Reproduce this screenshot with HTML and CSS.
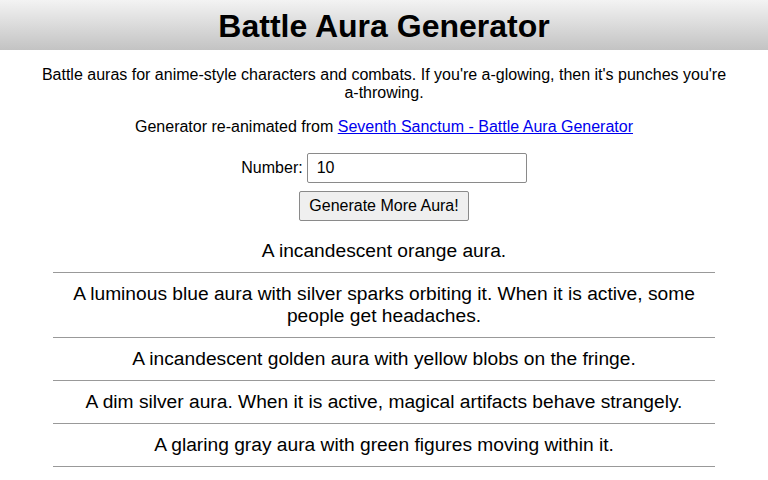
FILE: index.html
```html
<!DOCTYPE html>
<html>
<head>
<meta charset="utf-8">
<link rel="stylesheet" href="styles.css">
</head>
<body>
<header class="top">
  <h1 class="title">Battle Aura Generator</h1>
</header>
<main class="content">
  <p class="intro">Battle auras for anime-style characters and combats. If you're a-glowing, then it's punches you're a-throwing.</p>
  <p class="credit">Generator re-animated from <a href="#">Seventh Sanctum - Battle Aura Generator</a></p>
  <div class="form-row">
    <label class="label" for="num">Number:</label>
    <input class="num" id="num" type="text" value="10">
  </div>
  <div class="btn-row">
    <button class="btn">Generate More Aura!</button>
  </div>
  <ul class="results">
    <li class="item">A incandescent orange aura.</li>
    <li class="item">A luminous blue aura with silver sparks orbiting it. When it is active, some people get headaches.</li>
    <li class="item">A incandescent golden aura with yellow blobs on the fringe.</li>
    <li class="item">A dim silver aura. When it is active, magical artifacts behave strangely.</li>
    <li class="item">A glaring gray aura with green figures moving within it.</li>
  </ul>
</main>
</body>
</html>
```

FILE: styles.css
```css
html, body {
  margin: 0;
  padding: 0;
  background: #fff;
}
body {
  font-family: "Liberation Sans", Arial, sans-serif;
  font-size: 16px;
  color: #000;
}
.top {
  height: 50px;
  box-sizing: border-box;
  padding-top: 2px;
  background: linear-gradient(to bottom, #f3f3f3, #c3c3c3);
  display: flex;
  align-items: center;
  justify-content: center;
}
.title {
  margin: 0;
  font-size: 32px;
  font-weight: bold;
  line-height: 1;
}
.content {
  padding: 0 40px;
  text-align: center;
}
.intro {
  margin: 16px 0 0;
}
.credit {
  margin: 16px 0 0;
}
.credit a {
  color: #0000ee;
}
.form-row {
  margin-top: 17px;
  display: flex;
  justify-content: center;
  align-items: center;
  gap: 5px;
}
.label {
  font-size: 16px;
}
.num {
  box-sizing: border-box;
  width: 220px;
  height: 30px;
  border: 1px solid #8a8a8a;
  border-radius: 2px;
  padding: 0 9px;
  font-family: "Liberation Sans", Arial, sans-serif;
  font-size: 16px;
  color: #000;
  margin-left: -1px;
}
.btn-row {
  margin-top: 8px;
  display: flex;
  justify-content: center;
}
.btn {
  box-sizing: border-box;
  height: 30px;
  padding: 0 9px;
  border: 1px solid #8a8a8a;
  border-radius: 2px;
  background: #efefef;
  font-family: "Liberation Sans", Arial, sans-serif;
  font-size: 16px;
  color: #000;
}
.results {
  list-style: none;
  margin: 9px 13px 0;
  padding: 0;
}
.item {
  font-size: 19.2px;
  line-height: 22px;
  padding: 10px 0;
  border-bottom: 1px solid #999;
}
```
